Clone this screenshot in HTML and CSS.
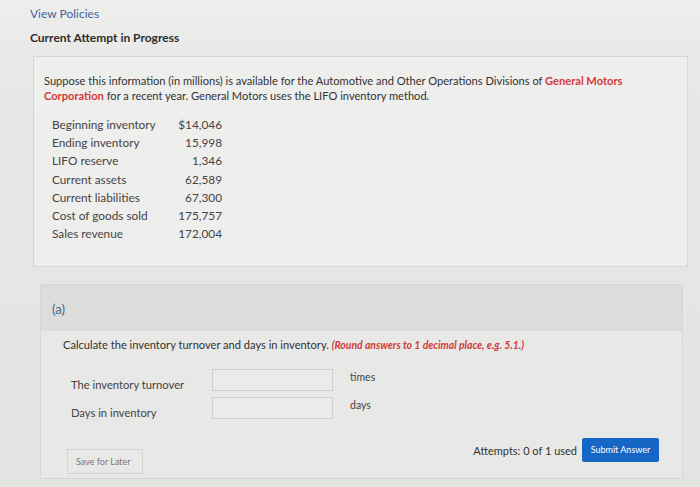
FILE: index.html
```html
<!DOCTYPE html>
<html>
<head>
<meta charset="utf-8">
<link rel="stylesheet" href="styles.css">
</head>
<body>
<div class="page">
  <a class="policies">View Policies</a>
  <div class="attempt">Current Attempt in Progress</div>
  <div class="infobox">
    <p class="intro">Suppose this information (in millions) is available for the Automotive and Other Operations Divisions of <span class="red">General Motors</span><br><span class="red">Corporation</span> for a recent year. General Motors uses the LIFO inventory method.</p>
    <table class="data">
      <tr><td class="lbl">Beginning inventory</td><td class="val">$14,046</td></tr>
      <tr><td class="lbl">Ending inventory</td><td class="val">15,998</td></tr>
      <tr><td class="lbl">LIFO reserve</td><td class="val">1,346</td></tr>
      <tr><td class="lbl">Current assets</td><td class="val">62,589</td></tr>
      <tr><td class="lbl">Current liabilities</td><td class="val">67,300</td></tr>
      <tr><td class="lbl">Cost of goods sold</td><td class="val">175,757</td></tr>
      <tr><td class="lbl">Sales revenue</td><td class="val">172,004</td></tr>
    </table>
  </div>
  <div class="part">
    <div class="part-head">(a)</div>
    <div class="part-body">
      <p class="task">Calculate the inventory turnover and days in inventory. <em class="round">(Round answers to 1 decimal place, e.g. 5.1.)</em></p>
      <div class="answer-row first">
        <span class="a-lbl">The inventory turnover</span>
        <span class="a-input"></span>
        <span class="a-unit">times</span>
      </div>
      <div class="answer-row">
        <span class="a-lbl">Days in inventory</span>
        <span class="a-input"></span>
        <span class="a-unit">days</span>
      </div>
      <div class="footer">
        <span class="save">Save for Later</span>
        <div class="submit-area">
          <span class="attempts">Attempts: 0 of 1 used</span>
          <span class="submit">Submit Answer</span>
        </div>
      </div>
    </div>
  </div>
</div>
</body>
</html>
```
FILE: styles.css
```css
* { box-sizing: border-box; }
html, body { margin: 0; padding: 0; }
body {
  width: 700px;
  height: 487px;
  overflow: hidden;
  background: linear-gradient(180deg, #eeeeec 0px, #e8e8e6 60px, #e3e3e1 487px);
  font-family: Lato, "Open Sans", sans-serif;
  color: #3a3a3a;
}
.page {
  padding: 6px 0 0 30px;
}
.policies {
  display: block;
  font-size: 12px;
  line-height: 15px;
  color: #4463a0;
}
.attempt {
  margin-top: 9px;
  font-size: 12px;
  line-height: 15px;
  font-weight: 700;
  color: #2e2e2e;
}
.infobox {
  margin: 11px 0 0 3px;
  width: 655px;
  height: 211px;
  border: 1px solid #d6d6d3;
  background: #eeeeec;
  padding: 16px 10px 0 10px;
}
.intro {
  margin: 0;
  font-size: 11.1px;
  line-height: 15px;
  color: #333;
}
.red { color: #d23a3a; font-weight: 700; }
.data {
  margin: 12px 0 0 8px;
  border-collapse: collapse;
  font-size: 11.8px;
  color: #444;
}
.data td {
  padding: 0;
  height: 18.3px;
}
.lbl { width: 126px; }
.val { width: 44px; text-align: right; }
.part {
  margin: 17px 0 0 10px;
  width: 643px;
  border: 1px solid #d6d6d3;
  background: #e8e8e6;
}
.part-head {
  height: 46px;
  background: #dcdcda;
  padding: 17px 0 0 11px;
  font-size: 13px;
  line-height: 15px;
  color: #46668c;
}
.part-body {
  height: 147px;
  padding: 6px 0 0 22px;
}
.task {
  margin: 0;
  font-size: 11.1px;
  line-height: 15px;
  color: #333;
}
.round {
  color: #d23a3a;
  font-weight: 700;
  font-size: 10.4px;
}
.answer-row {
  display: flex;
  align-items: center;
  height: 28px;
}
.answer-row.first { margin-top: 13px; }
.a-lbl {
  width: 141px;
  margin-left: 8px;
  font-size: 11.2px;
  color: #444;
  padding-top: 8px;
}
.a-input {
  width: 121px;
  height: 22px;
  border: 1px solid #cfcfcc;
  background: #ebebe9;
}
.a-unit {
  margin-left: 17px;
  font-size: 10.5px;
  color: #444;
  padding-bottom: 6px;
}
.footer {
  display: flex;
  justify-content: space-between;
  align-items: flex-start;
  margin-top: 8px;
  padding-right: 23px;
}
.save {
  margin: 19px 0 0 4px;
  width: 76px;
  height: 25px;
  border: 1px solid #d3d3d0;
  font-size: 9px;
  line-height: 23px;
  padding-left: 8px;
  color: #777;
}
.submit-area {
  display: flex;
  align-items: center;
  gap: 5px;
  margin-top: 8px;
}
.attempts {
  font-size: 11px;
  color: #333;
}
.submit {
  width: 77px;
  height: 24px;
  background: #1666c5;
  color: #fff;
  font-size: 9px;
  line-height: 24px;
  text-align: center;
  border-radius: 2px;
}
```
